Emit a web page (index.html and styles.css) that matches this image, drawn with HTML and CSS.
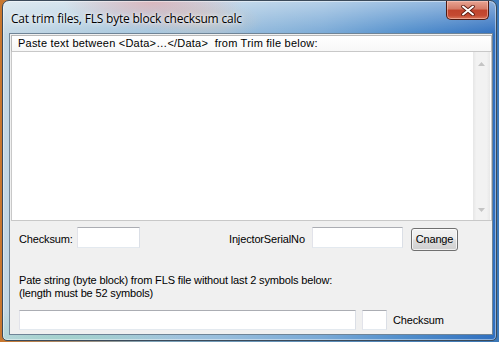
FILE: index.html
```html
<!DOCTYPE html>
<html>
<head>
<meta charset="utf-8">
<link rel="stylesheet" href="styles.css">
</head>
<body>
<div class="desk">
  <div class="win">
    <div class="titlebar">
      <span class="title">Cat trim files, FLS byte block checksum calc</span>
      <div class="close">
        <svg width="14" height="11" viewBox="0 0 14 11"><path d="M2 1.5 L12 9.5 M12 1.5 L2 9.5" stroke="#5a1a10" stroke-width="3.6" stroke-linecap="round"/><path d="M2 1.5 L12 9.5 M12 1.5 L2 9.5" stroke="#ffffff" stroke-width="2" stroke-linecap="round"/></svg>
      </div>
    </div>
    <div class="client">
      <div class="group">
        <div class="grouplabel">Paste text between &lt;Data&gt;…&lt;/Data&gt;&nbsp; from Trim file below:</div>
        <div class="memo">
          <div class="memoarea"></div>
          <div class="vscroll">
            <div class="sbtn sbtn-up"><svg width="7" height="4" viewBox="0 0 7 4"><path d="M0 4 L3.5 0 L7 4 Z" fill="#c4c4c4"/></svg></div>
            <div class="strack"></div>
            <div class="sbtn sbtn-down"><svg width="7" height="4" viewBox="0 0 7 4"><path d="M0 0 L3.5 4 L7 0 Z" fill="#c4c4c4"/></svg></div>
          </div>
        </div>
      </div>
      <div class="row1">
        <span class="lbl lbl-cs">Checksum:</span>
        <div class="tb tb-cs"></div>
        <span class="lbl lbl-inj">InjectorSerialNo</span>
        <div class="tb tb-inj"></div>
        <div class="btn">Cnange</div>
      </div>
      <div class="note">Pate string (byte block) from FLS file without last 2 symbols below:<br>(length must be 52 symbols)</div>
      <div class="row2">
        <div class="tb tb-str"></div>
        <div class="tb tb-small"></div>
        <span class="lbl lbl-cs2">Checksum</span>
      </div>
    </div>
  </div>
</div>
</body>
</html>
```

FILE: styles.css
```css
html, body {
  margin: 0;
  padding: 0;
}
body {
  width: 499px;
  height: 342px;
  overflow: hidden;
}
.desk {
  width: 499px;
  height: 342px;
  background: linear-gradient(90deg, #c9772e 0%, #7fa3b8 30%, #3b78b8 100%);
  display: flex;
}
.win {
  margin-left: 2px;
  width: 495px;
  height: 341px;
  box-sizing: border-box;
  border: 1px solid #3b4a5a;
  border-radius: 7px 7px 5px 5px;
  background:
    radial-gradient(ellipse 90px 30px at 150px 0px, rgba(230,150,150,0.55), rgba(230,150,150,0) 100%),
    radial-gradient(ellipse 60px 20px at 200px 20px, rgba(240,200,170,0.4), rgba(240,200,170,0) 100%),
    radial-gradient(ellipse 120px 40px at 60px 345px, rgba(150,210,190,0.7), rgba(150,210,190,0) 100%),
    linear-gradient(180deg, rgba(255,255,255,0.45) 0px, rgba(255,255,255,0) 34px),
    linear-gradient(90deg, #c4d8e5 0%, #aecbdf 20%, #97bddc 45%, #79a9d6 65%, #4f8dcb 82%, #2f6fbf 100%);
  display: flex;
  flex-direction: column;
  padding: 0 3px 5px 6px;
  overflow: hidden;
  box-shadow: inset 0 0 0 1px rgba(255,255,255,0.45);
}
.titlebar {
  height: 32px;
  flex: none;
  display: flex;
  align-items: flex-start;
  justify-content: space-between;
}
.title {
  font-family: "Open Sans", "Noto Sans", sans-serif;
  font-size: 12px;
  color: #000;
  margin-top: 9px;
  margin-left: 2px;
  letter-spacing: -0.2px;
  text-shadow: 0 0 6px rgba(255,255,255,0.9), 0 0 3px rgba(255,255,255,0.9);
}
.close {
  width: 43px;
  height: 19px;
  box-sizing: border-box;
  margin-right: 4px;
  border: 1px solid #4d1a12;
  border-top: none;
  border-radius: 0 0 5px 5px;
  background: linear-gradient(180deg, #e8a493 0%, #d47a66 45%, #c0432c 50%, #c44a32 80%, #d8765a 100%);
  box-shadow: inset 0 0 0 1px rgba(255,210,200,0.5);
  display: flex;
  align-items: center;
  justify-content: center;
}
.client {
  flex: 1;
  background: #f0f0f0;
  border: 1px solid #6f8496;
  display: flex;
  flex-direction: column;
  font-family: "Liberation Sans", Arial, sans-serif;
  font-size: 11px;
  letter-spacing: -0.15px;
  color: #000;
}
.group {
  margin: 1px 0 0 1px;
  display: flex;
  flex-direction: column;
}
.grouplabel {
  height: 17px;
  box-sizing: border-box;
  border: 1px solid #b8b8b8;
  border-bottom: 1px solid #c8c8c8;
  background: linear-gradient(180deg, #ffffff 0%, #f7f7f7 100%);
  padding-left: 6px;
  line-height: 15px;
  letter-spacing: 0.22px;
}
.memo {
  height: 169px;
  box-sizing: border-box;
  border: 1px solid #c8c8c8;
  border-top: none;
  background: #fff;
  display: flex;
}
.memoarea {
  flex: 1;
}
.vscroll {
  width: 17px;
  display: flex;
  flex-direction: column;
  background: linear-gradient(90deg, #e6e6e6 0%, #f2f2f2 20%, #f2f2f2 80%, #e8e8e8 100%);
  margin-right: 1px;
}
.sbtn {
  height: 17px;
  box-sizing: border-box;
  display: flex;
  justify-content: center;
}
.sbtn-up {
  align-items: flex-end;
  padding-bottom: 3px;
}
.sbtn-down {
  align-items: flex-start;
  padding-top: 5px;
}
.strack {
  flex: 1;
}
.row1 {
  display: flex;
  align-items: center;
  margin-top: 6px;
  height: 24px;
}
.lbl-cs {
  margin-left: 9px;
  width: 58px;
}
.tb {
  box-sizing: border-box;
  background: #fff;
  border: 1px solid #d5dbe1;
  border-top-color: #abadb3;
  border-left-color: #e2e3ea;
  border-right-color: #dbdfe6;
  border-bottom-color: #e3e9ef;
}
.tb-cs {
  width: 63px;
  height: 21px;
  margin-top: -3px;
}
.lbl-inj {
  margin-left: 89px;
  width: 83px;
}
.tb-inj {
  width: 91px;
  height: 21px;
  margin-top: -3px;
}
.btn {
  margin-left: 8px;
  width: 47px;
  height: 23px;
  box-sizing: border-box;
  border: 1px solid #707070;
  border-radius: 3px;
  background: linear-gradient(180deg, #f2f2f2 0%, #ebebeb 48%, #dddddd 52%, #cfcfcf 100%);
  box-shadow: inset 0 0 0 1px rgba(255,255,255,0.7);
  display: flex;
  align-items: center;
  justify-content: center;
  font-size: 11px;
}
.note {
  margin-top: 23px;
  margin-left: 9px;
  line-height: 13px;
}
.row2 {
  display: flex;
  align-items: center;
  margin-top: 10px;
  margin-left: 9px;
}
.tb-str {
  width: 337px;
  height: 20px;
}
.tb-small {
  margin-left: 6px;
  width: 25px;
  height: 20px;
}
.lbl-cs2 {
  margin-left: 6px;
}
```
